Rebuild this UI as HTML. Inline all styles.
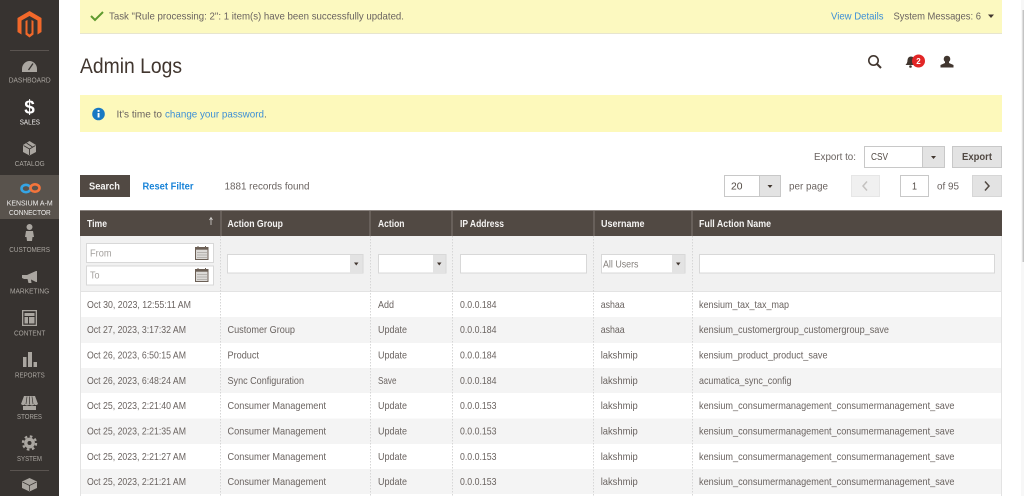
<!DOCTYPE html>
<html lang="en"><head><meta charset="utf-8"><title>Admin Logs</title>
<style>
html,body{margin:0;padding:0;width:1024px;height:496px;overflow:hidden;background:#fff}
svg{display:block}
text{font-family:"Liberation Sans",sans-serif;font-size:10.3px;fill:#6a6360}
.n{font-size:7.5px;fill:#aaa6a0;text-anchor:start}
.w{fill:#f4f3f2}
.h{font-size:10px;font-weight:bold;fill:#f5f4f3}
.l{fill:#3d8fd6}
.g{fill:#aaa6a0}
</style></head><body>
<svg width="1024" height="496" viewBox="0 0 1024 496" xmlns="http://www.w3.org/2000/svg">
<rect width="1024" height="496" fill="#fff"/>

<!-- sidebar -->
<rect width="59" height="496" fill="#373330"/>
<rect y="175" width="59" height="44" fill="#59534d"/>
<path d="M29.5 11 L41.5 18 V32 L37.5 34.5 V20.5 L29.5 16 L21.5 20.5 V34.5 L17.5 32 V18 Z" fill="#f1682a"/>
<path d="M27.5 20 L25.5 21 V34.5 L29.5 37.5 L33.5 34.5 V21 L31.5 20 V33 L29.5 34.5 L27.5 33 Z" fill="#f1682a"/>
<rect x="10" y="50" width="39" height="1" fill="#5a5450"/>
<path d="M22 72 V69 A7.5 8 0 0 1 37 69 V72 Z" fill="#aaa6a0"/><path d="M28.5 70 L33 63.5" stroke="#373330" stroke-width="1.3"/>
<text x="8.7" y="82.5" class="n" textLength="42" lengthAdjust="spacingAndGlyphs">DASHBOARD</text>
<text x="29.5" y="113.5" text-anchor="middle" style="font-size:19px;font-weight:bold;fill:#fff">$</text>
<text x="19.7" y="124.5" class="n" style="fill:#f0efee" textLength="20.3" lengthAdjust="spacingAndGlyphs">SALES</text>
<path d="M23 145 L29.5 141 L36 145 V152 L29.5 155.5 L23 152 Z" fill="#aaa6a0"/><path d="M23.5 145.5 L29.5 149 L35.5 145.5 M29.5 149 V155 M26.5 143 L32.5 147" stroke="#373330" stroke-width=".9" fill="none"/>
<text x="14.7" y="166" class="n" textLength="30" lengthAdjust="spacingAndGlyphs">CATALOG</text>
<ellipse cx="26" cy="188.5" rx="4.5" ry="3.7" fill="none" stroke="#35a5e5" stroke-width="2.6"/>
<ellipse cx="35" cy="188" rx="4.5" ry="3.7" fill="none" stroke="#f4743b" stroke-width="2.6"/>
<text x="6.7" y="205.5" class="n" style="fill:#f0efee" textLength="46" lengthAdjust="spacingAndGlyphs">KENSIUM A-M</text>
<text x="9" y="215" class="n" style="fill:#f0efee" textLength="41.7" lengthAdjust="spacingAndGlyphs">CONNECTOR</text>
<circle cx="29.5" cy="227" r="3" fill="#aaa6a0"/><path d="M26 231 H33 L34 237 H32.5 L32 241 H27 L26.5 237 H25 Z" fill="#aaa6a0"/>
<text x="9.3" y="252" class="n" textLength="40.7" lengthAdjust="spacingAndGlyphs">CUSTOMERS</text>
<path d="M22 275 H27 L36 271 H37 V282 H36 L31 279.5 L31.5 283 H28.5 L27.5 279 H24 L22 278 Z" fill="#aaa6a0"/>
<text x="10" y="293.5" class="n" textLength="39.3" lengthAdjust="spacingAndGlyphs">MARKETING</text>
<path fill-rule="evenodd" d="M22 310 H37 V326 H22 Z M23.3 311.3 V324.7 H35.7 V311.3 Z" fill="#aaa6a0"/><path d="M24.5 313 H34.5 V316 H24.5 Z M24.5 317 H28 V323.5 H24.5 Z M29 317 H34.5 V323.5 H29 Z" fill="#aaa6a0"/>
<text x="14" y="335.5" class="n" textLength="31.3" lengthAdjust="spacingAndGlyphs">CONTENT</text>
<path d="M23 357 H26.5 V367 H23 Z M28 352 H32 V367 H28 Z M33.5 362 H37 V367 H33.5 Z" fill="#aaa6a0"/>
<text x="15" y="377.5" class="n" textLength="29.7" lengthAdjust="spacingAndGlyphs">REPORTS</text>
<path d="M24 396 H35 L38 404 Q36 406 34.5 404.5 Q32 406.5 29.5 404.5 Q27 406.5 24.5 404.5 Q23 406 21 404 Z" fill="#aaa6a0"/><path d="M23 406 H36 V410 H23 Z" fill="#aaa6a0"/><path d="M27 396.5 L26 404 M29.5 396.5 V404 M32 396.5 L33 404" stroke="#373330" stroke-width=".7"/>
<text x="17" y="419" class="n" textLength="25" lengthAdjust="spacingAndGlyphs">STORES</text>
<circle cx="29.5" cy="443" r="3.7" fill="none" stroke="#aaa6a0" stroke-width="3.4"/><circle cx="29.5" cy="443" r="6.6" fill="none" stroke="#aaa6a0" stroke-width="2.2" stroke-dasharray="2.6 2.6"/>
<text x="17" y="461" class="n" textLength="25" lengthAdjust="spacingAndGlyphs">SYSTEM</text>
<rect x="10" y="470" width="39" height="1" fill="#5a5450"/>
<path d="M29.5 478 L37 481.5 V488 L29.5 491.5 L22 488 V481.5 Z" fill="#aaa6a0"/><path d="M22.5 482 L29.5 485.5 L36.5 482 M29.5 485.5 V491" stroke="#373330" stroke-width=".7" fill="none"/>

<!-- top notice -->
<rect x="80" width="922" height="33" fill="#fcf9c0"/>
<rect x="80" y="33" width="922" height="1" fill="#e7e5cf"/>
<path d="M91 16 L95 20 L103 12" fill="none" stroke="#5e9a2e" stroke-width="2"/>
<text x="109" y="19.5" textLength="295" lengthAdjust="spacingAndGlyphs">Task "Rule processing: 2": 1 item(s) have been successfully updated.</text>
<text x="831" y="19.5" class="l" textLength="52.5" lengthAdjust="spacingAndGlyphs">View Details</text>
<text x="893.5" y="19.5" textLength="87.5" lengthAdjust="spacingAndGlyphs">System Messages: 6</text>
<path d="M988 14.5 H994 L991 18 Z" fill="#41362f"/>

<!-- title -->
<text x="80" y="73" style="font-size:21.5px;fill:#41362f" textLength="102" lengthAdjust="spacingAndGlyphs">Admin Logs</text>
<circle cx="873.5" cy="60.5" r="4.7" fill="none" stroke="#41362f" stroke-width="1.6"/><path d="M877 64 L881 68" stroke="#41362f" stroke-width="2"/>
<path d="M905.5 65 Q907.5 63 907.5 60 Q908 56.5 911 56.5 Q914 56.5 914.5 60 Q914.5 63 916.5 65 Z" fill="#41362f"/><circle cx="910.5" cy="66.5" r="1.3" fill="#41362f"/>
<circle cx="918.5" cy="61" r="6.5" fill="#e22626"/>
<text x="918.5" y="64" text-anchor="middle" style="font-size:8px;font-weight:bold;fill:#fff">2</text>
<circle cx="947" cy="59" r="3.3" fill="#41362f"/><path d="M945 61 H949 V63 L953.5 65 V67.5 H940.5 V65 L945 63 Z" fill="#41362f"/>

<!-- password notice -->
<rect x="80" y="95" width="922" height="37" fill="#fdf9bb"/>
<circle cx="98.5" cy="114" r="6.3" fill="#1979c3"/>
<rect x="97.6" y="113" width="1.9" height="4.5" fill="#fff"/><rect x="97.6" y="110" width="1.9" height="1.9" fill="#fff"/>
<text x="116.5" y="117.5" textLength="45.5" lengthAdjust="spacingAndGlyphs">It's time to</text>
<text x="165" y="117.5" class="l" textLength="99" lengthAdjust="spacingAndGlyphs">change your password</text>
<text x="264" y="117.5">.</text>

<!-- export -->
<text x="814" y="160" textLength="42" lengthAdjust="spacingAndGlyphs">Export to:</text>
<rect x="864.5" y="146.5" width="80" height="21" fill="#fff" stroke="#c8c8c8"/>
<rect x="922" y="147" width="22" height="20" fill="#e3e3e3"/><rect x="922" y="147" width="1" height="20" fill="#c8c8c8"/>
<path d="M931 156 H936 L933.5 159 Z" fill="#41362f"/>
<text x="871" y="160" textLength="17" lengthAdjust="spacingAndGlyphs" style="fill:#514943">CSV</text>
<rect x="952.5" y="146.5" width="49" height="21" fill="#e3e3e3" stroke="#c8c8c8"/>
<text x="962" y="160" textLength="30" lengthAdjust="spacingAndGlyphs" style="font-weight:bold;fill:#514943">Export</text>

<!-- search row -->
<rect x="80" y="175" width="50" height="22" fill="#514943"/>
<text x="89" y="189.5" class="w" textLength="31" lengthAdjust="spacingAndGlyphs" style="font-weight:bold">Search</text>
<text x="142.5" y="189.5" textLength="51" lengthAdjust="spacingAndGlyphs" style="font-weight:bold;fill:#1a84d8">Reset Filter</text>
<text x="224.5" y="189.5" textLength="85" lengthAdjust="spacingAndGlyphs">1881 records found</text>

<!-- pager -->
<rect x="724.5" y="175.5" width="56" height="21" fill="#fff" stroke="#c8c8c8"/>
<rect x="759" y="176" width="21" height="20" fill="#e3e3e3"/><rect x="759" y="176" width="1" height="20" fill="#c8c8c8"/>
<path d="M767.5 185 H772.5 L770 188 Z" fill="#41362f"/>
<text x="731" y="189.5" textLength="11.5" lengthAdjust="spacingAndGlyphs" style="fill:#514943">20</text>
<text x="789" y="189.5" textLength="39" lengthAdjust="spacingAndGlyphs">per page</text>
<rect x="851.5" y="175.5" width="28" height="21" fill="#f0f0f0" stroke="#e6e6e6"/>
<path d="M867 181.5 L863 186 L867 190.5" fill="none" stroke="#c4c2c0" stroke-width="1.5"/>
<rect x="900.5" y="175.5" width="28" height="21" fill="#fff" stroke="#c8c8c8"/>
<text x="912" y="189.5" textLength="5" lengthAdjust="spacingAndGlyphs" style="fill:#514943">1</text>
<text x="937" y="189.5" textLength="22" lengthAdjust="spacingAndGlyphs">of 95</text>
<rect x="972.5" y="175.5" width="29" height="21" fill="#e3e3e3" stroke="#d6d6d6"/>
<path d="M985 181.5 L989 186 L985 190.5" fill="none" stroke="#514943" stroke-width="1.5"/>

<!-- table bg -->
<rect x="80" y="210" width="922" height="26" fill="#514943"/>
<rect x="80" y="210" width="922" height="1" fill="#8a837f"/>
<rect x="80" y="236" width="922" height="56" fill="#f1f1f1"/>
<rect x="80" y="291" width="922" height="1" fill="#e3e3e3"/>
<rect x="80" y="317" width="922" height="26" fill="#f4f4f4"/>
<rect x="80" y="368" width="922" height="25" fill="#f4f4f4"/>
<rect x="80" y="418.5" width="922" height="25.5" fill="#f4f4f4"/>
<rect x="80" y="469" width="922" height="25" fill="#f4f4f4"/>
<path d="M80.5 236 V496 M1001.5 236 V496" stroke="#e3e3e3"/>
<path d="M221 211 V236 M370 211 V236 M452 211 V236 M594 211 V236 M692 211 V236" stroke="#8a837f" stroke-width=".8"/>
<path d="M220.5 236 V496 M370.5 236 V496 M452.5 236 V496 M593.5 236 V496 M692.5 236 V496" stroke="#d6d6d6" stroke-dasharray="1.5 1.5"/>

<!-- headers -->
<text x="87" y="227" class="h" textLength="20" lengthAdjust="spacingAndGlyphs">Time</text>
<path d="M211 218 V225 M209.5 220 L211 217.5 L212.5 220" stroke="#d5d2cf" fill="none" stroke-width=".8"/>
<text x="227.5" y="227" class="h" textLength="55.5" lengthAdjust="spacingAndGlyphs">Action Group</text>
<text x="378" y="227" class="h" textLength="26.5" lengthAdjust="spacingAndGlyphs">Action</text>
<text x="460" y="227" class="h" textLength="44" lengthAdjust="spacingAndGlyphs">IP Address</text>
<text x="601" y="227" class="h" textLength="43.5" lengthAdjust="spacingAndGlyphs">Username</text>
<text x="699" y="227" class="h" textLength="72" lengthAdjust="spacingAndGlyphs">Full Action Name</text>

<!-- filters -->
<g fill="#fff" stroke="#d8d8d8">
<rect x="86.5" y="243.5" width="127" height="19"/>
<rect x="86.5" y="266" width="127" height="19"/>
<rect x="227.5" y="254.5" width="135.5" height="18.5"/>
<rect x="378.5" y="254.5" width="67.5" height="18.5"/>
<rect x="460.5" y="254.5" width="126" height="18.5"/>
<rect x="601.5" y="254.5" width="83.5" height="18.5"/>
<rect x="699.5" y="254.5" width="295" height="18.5"/>
</g>
<g fill="#e3e3e3">
<rect x="350" y="255" width="12.5" height="18"/>
<rect x="433" y="255" width="12.5" height="18"/>
<rect x="672" y="255" width="12.5" height="18"/>
</g>
<g fill="#41362f">
<path d="M354 262.5 H358.5 L356.25 265.5 Z"/>
<path d="M437 262.5 H441.5 L439.25 265.5 Z"/>
<path d="M676 262.5 H680.5 L678.25 265.5 Z"/>
</g>
<text x="90" y="256.5" textLength="21.5" lengthAdjust="spacingAndGlyphs" style="fill:#a3a09d">From</text>
<text x="90" y="278.5" textLength="9.5" lengthAdjust="spacingAndGlyphs" style="fill:#a3a09d">To</text>
<text x="603" y="267.5" textLength="35.5" lengthAdjust="spacingAndGlyphs" style="fill:#85807c">All Users</text>
<g>
<rect x="195.5" y="247.5" width="12.5" height="12" fill="#dcdad7" stroke="#6b5f55"/><rect x="195.5" y="247.5" width="12.5" height="2.2" fill="#6b5f55"/>
<path d="M198 249 V246 M205.5 249 V246" stroke="#6b5f55"/>
<path d="M197.5 252.5 H206.5 M197.5 255 H206.5 M197.5 257.500 H206.5" stroke="#8e8a86" stroke-dasharray="1 1"/>
<rect x="195.5" y="269.5" width="12.5" height="12" fill="#dcdad7" stroke="#6b5f55"/><rect x="195.5" y="269.5" width="12.5" height="2.2" fill="#6b5f55"/>
<path d="M198 271 V268 M205.5 271 V268" stroke="#6b5f55"/>
<path d="M197.5 274.5 H206.5 M197.5 277 H206.5 M197.5 279.5 H206.5" stroke="#8e8a86" stroke-dasharray="1 1"/>
</g>

<!-- rows -->
<text x="87" y="308" textLength="104" lengthAdjust="spacingAndGlyphs">Oct 30, 2023, 12:55:11 AM</text>
<text x="378" y="308" textLength="16" lengthAdjust="spacingAndGlyphs">Add</text>
<text x="460" y="308" textLength="36.5" lengthAdjust="spacingAndGlyphs">0.0.0.184</text>
<text x="600.7" y="308" textLength="24" lengthAdjust="spacingAndGlyphs">ashaa</text>
<text x="699" y="308" textLength="90" lengthAdjust="spacingAndGlyphs">kensium_tax_tax_map</text>

<text x="87" y="333" textLength="99" lengthAdjust="spacingAndGlyphs">Oct 27, 2023, 3:17:32 AM</text>
<text x="227.5" y="333" textLength="67.5" lengthAdjust="spacingAndGlyphs">Customer Group</text>
<text x="378" y="333" textLength="29" lengthAdjust="spacingAndGlyphs">Update</text>
<text x="460" y="333" textLength="36.5" lengthAdjust="spacingAndGlyphs">0.0.0.184</text>
<text x="600.7" y="333" textLength="24" lengthAdjust="spacingAndGlyphs">ashaa</text>
<text x="699" y="333" textLength="190" lengthAdjust="spacingAndGlyphs">kensium_customergroup_customergroup_save</text>

<text x="87" y="358.5" textLength="99" lengthAdjust="spacingAndGlyphs">Oct 26, 2023, 6:50:15 AM</text>
<text x="227.5" y="358.5" textLength="31.5" lengthAdjust="spacingAndGlyphs">Product</text>
<text x="378" y="358.5" textLength="29" lengthAdjust="spacingAndGlyphs">Update</text>
<text x="460" y="358.5" textLength="36.5" lengthAdjust="spacingAndGlyphs">0.0.0.184</text>
<text x="600.7" y="358.5" textLength="37" lengthAdjust="spacingAndGlyphs">lakshmip</text>
<text x="699" y="358.5" textLength="128.5" lengthAdjust="spacingAndGlyphs">kensium_product_product_save</text>

<text x="87" y="384" textLength="99" lengthAdjust="spacingAndGlyphs">Oct 26, 2023, 6:48:24 AM</text>
<text x="227.5" y="384" textLength="76.5" lengthAdjust="spacingAndGlyphs">Sync Configuration</text>
<text x="378" y="384" textLength="18.5" lengthAdjust="spacingAndGlyphs">Save</text>
<text x="460" y="384" textLength="36.5" lengthAdjust="spacingAndGlyphs">0.0.0.184</text>
<text x="600.7" y="384" textLength="37" lengthAdjust="spacingAndGlyphs">lakshmip</text>
<text x="699" y="384" textLength="92.5" lengthAdjust="spacingAndGlyphs">acumatica_sync_config</text>

<text x="87" y="409" textLength="99" lengthAdjust="spacingAndGlyphs">Oct 25, 2023, 2:21:40 AM</text>
<text x="227.5" y="409" textLength="98.5" lengthAdjust="spacingAndGlyphs">Consumer Management</text>
<text x="378" y="409" textLength="29" lengthAdjust="spacingAndGlyphs">Update</text>
<text x="460" y="409" textLength="36.5" lengthAdjust="spacingAndGlyphs">0.0.0.153</text>
<text x="600.7" y="409" textLength="37" lengthAdjust="spacingAndGlyphs">lakshmip</text>
<text x="699" y="409" textLength="255.5" lengthAdjust="spacingAndGlyphs">kensium_consumermanagement_consumermanagement_save</text>

<text x="87" y="434.5" textLength="99" lengthAdjust="spacingAndGlyphs">Oct 25, 2023, 2:21:35 AM</text>
<text x="227.5" y="434.5" textLength="98.5" lengthAdjust="spacingAndGlyphs">Consumer Management</text>
<text x="378" y="434.5" textLength="29" lengthAdjust="spacingAndGlyphs">Update</text>
<text x="460" y="434.5" textLength="36.5" lengthAdjust="spacingAndGlyphs">0.0.0.153</text>
<text x="600.7" y="434.5" textLength="37" lengthAdjust="spacingAndGlyphs">lakshmip</text>
<text x="699" y="434.5" textLength="255.5" lengthAdjust="spacingAndGlyphs">kensium_consumermanagement_consumermanagement_save</text>

<text x="87" y="460" textLength="99" lengthAdjust="spacingAndGlyphs">Oct 25, 2023, 2:21:27 AM</text>
<text x="227.5" y="460" textLength="98.5" lengthAdjust="spacingAndGlyphs">Consumer Management</text>
<text x="378" y="460" textLength="29" lengthAdjust="spacingAndGlyphs">Update</text>
<text x="460" y="460" textLength="36.5" lengthAdjust="spacingAndGlyphs">0.0.0.153</text>
<text x="600.7" y="460" textLength="37" lengthAdjust="spacingAndGlyphs">lakshmip</text>
<text x="699" y="460" textLength="255.5" lengthAdjust="spacingAndGlyphs">kensium_consumermanagement_consumermanagement_save</text>

<text x="87" y="485" textLength="99" lengthAdjust="spacingAndGlyphs">Oct 25, 2023, 2:21:21 AM</text>
<text x="227.5" y="485" textLength="98.5" lengthAdjust="spacingAndGlyphs">Consumer Management</text>
<text x="378" y="485" textLength="29" lengthAdjust="spacingAndGlyphs">Update</text>
<text x="460" y="485" textLength="36.5" lengthAdjust="spacingAndGlyphs">0.0.0.153</text>
<text x="600.7" y="485" textLength="37" lengthAdjust="spacingAndGlyphs">lakshmip</text>
<text x="699" y="485" textLength="255.5" lengthAdjust="spacingAndGlyphs">kensium_consumermanagement_consumermanagement_save</text>

<!-- scrollbar -->
<rect x="1021" y="0" width="3" height="496" fill="#f7f7f7"/>
<rect x="1022.5" y="10" width="1.5" height="252" fill="#c4c4c4"/>
</svg>
</body></html>
